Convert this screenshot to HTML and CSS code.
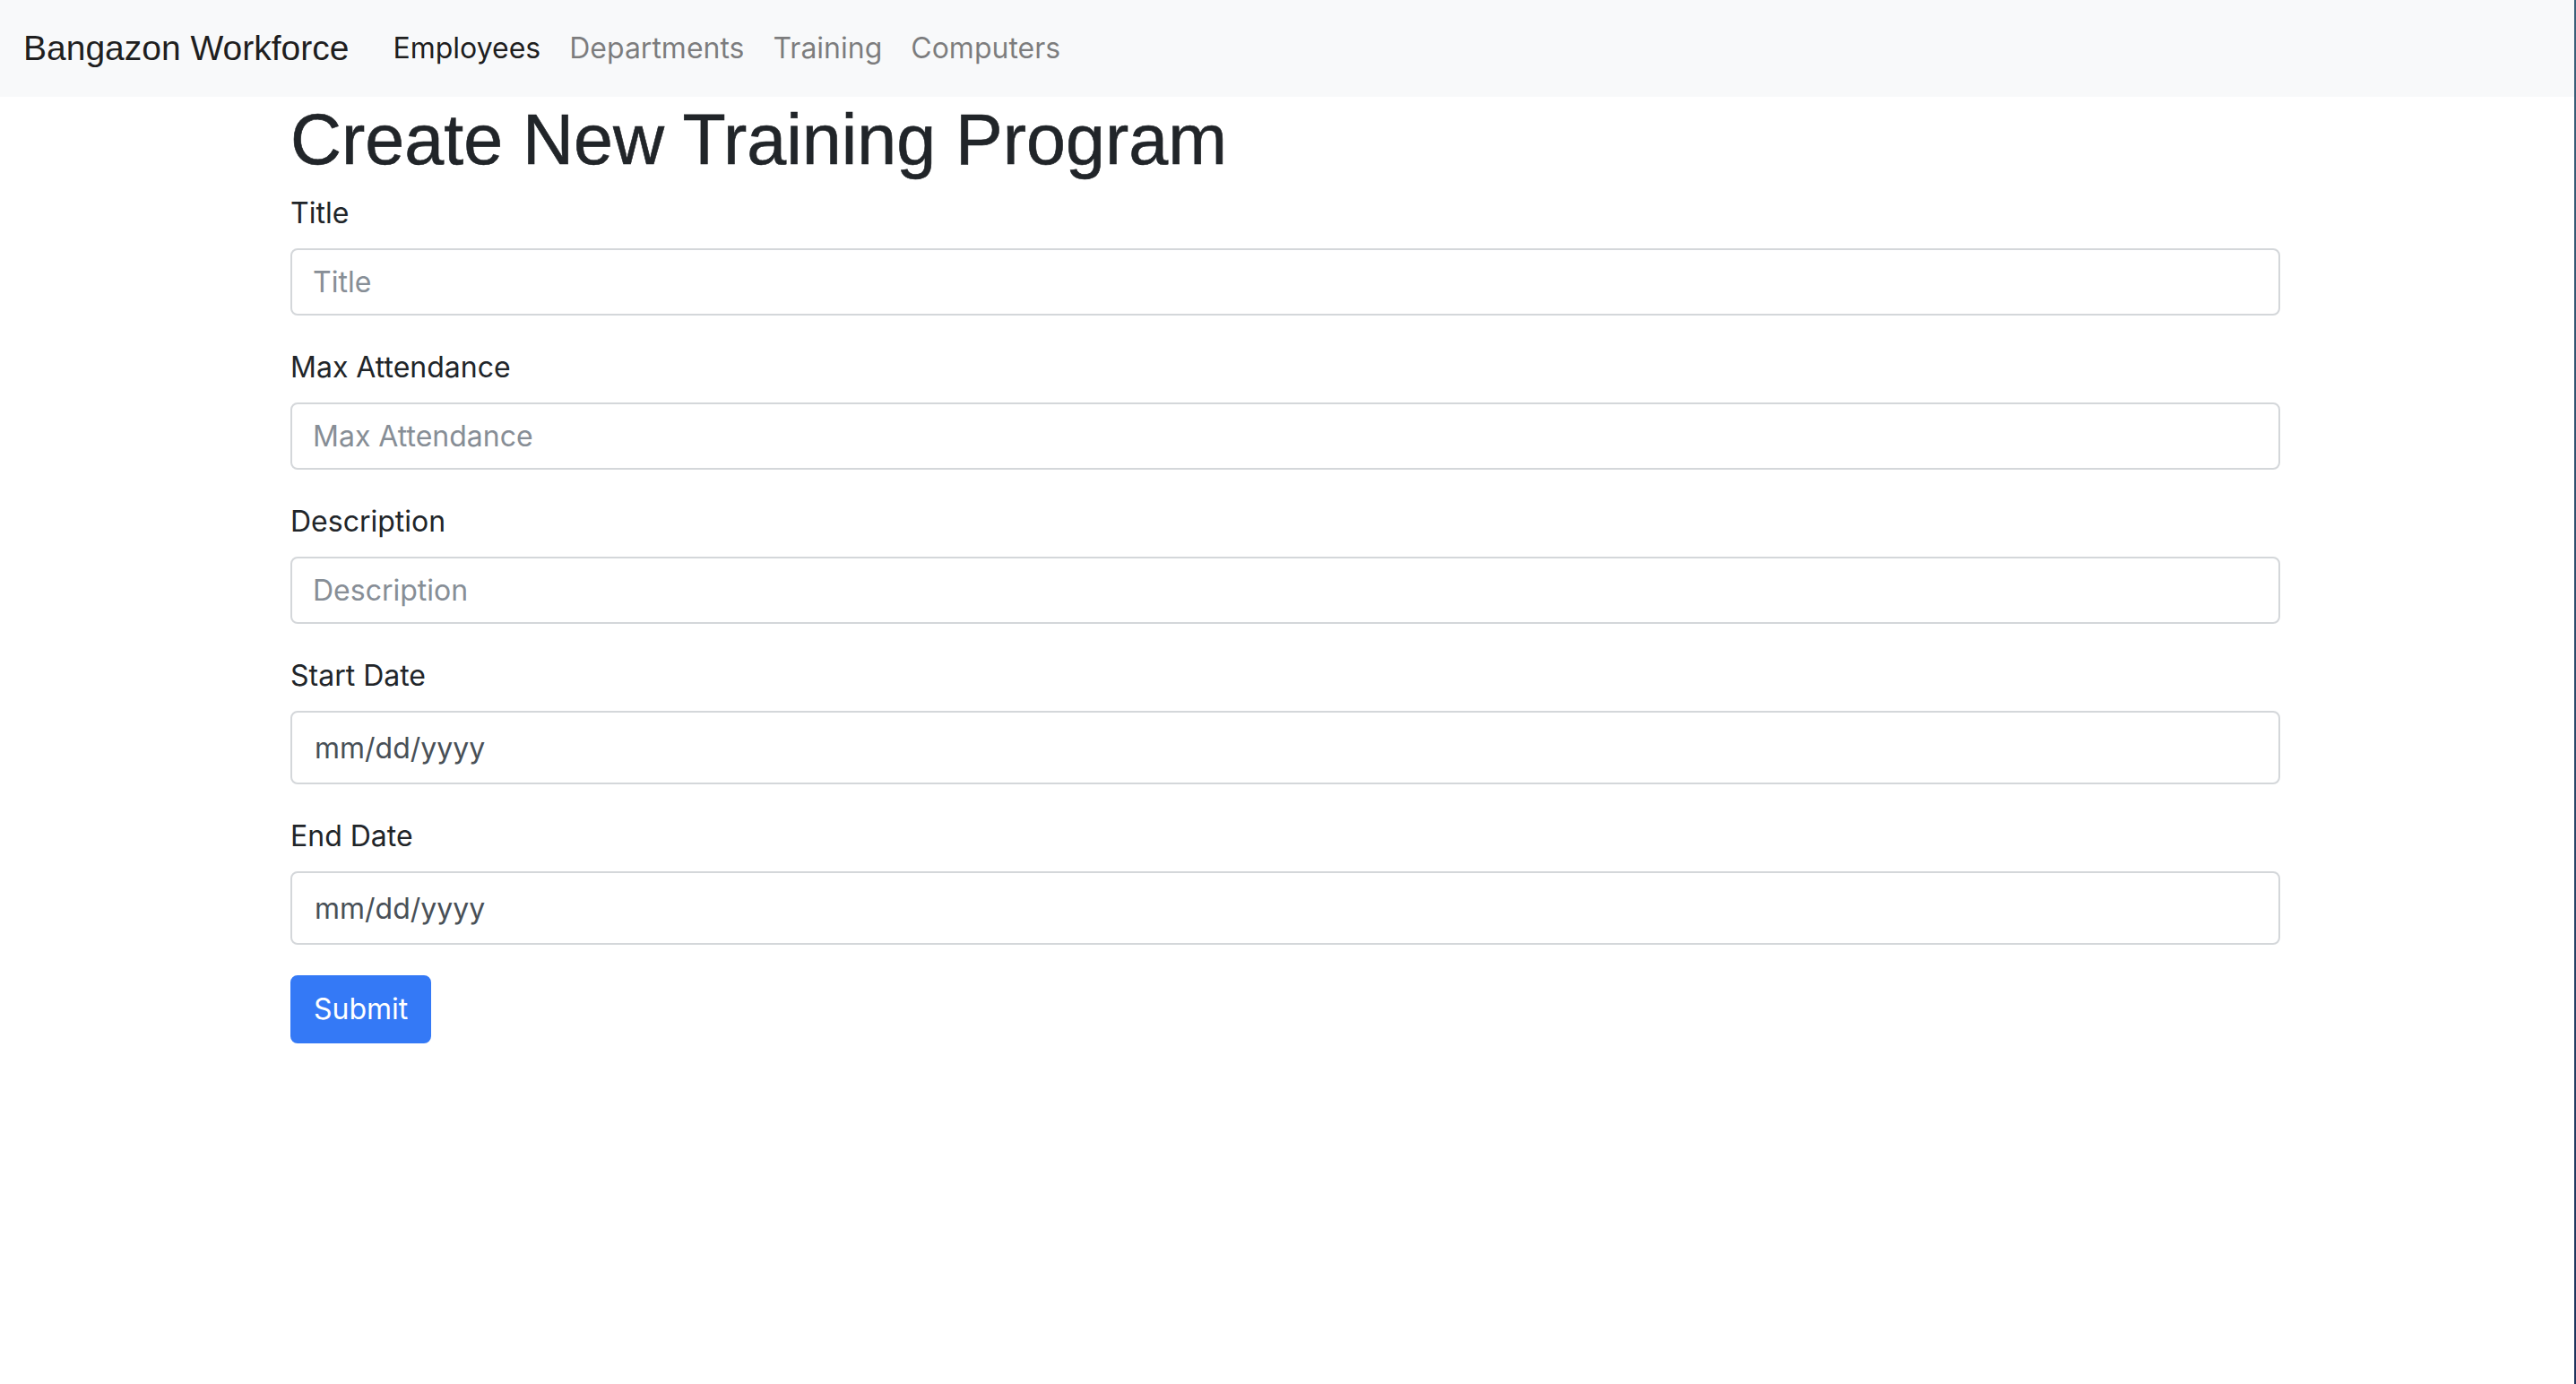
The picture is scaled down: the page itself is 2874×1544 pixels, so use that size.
FILE: index.html
```html
<!DOCTYPE html>
<html lang="en">
<head>
<meta charset="utf-8">
<title>Bangazon Workforce</title>
<link rel="stylesheet" href="styles.css">
</head>
<body>
<div class="page">
  <nav class="navbar">
    <a class="brand" href="#">Bangazon Workforce</a>
    <ul class="nav">
      <li><a class="nav-link active" href="#">Employees</a></li>
      <li><a class="nav-link" href="#">Departments</a></li>
      <li><a class="nav-link" href="#">Training</a></li>
      <li><a class="nav-link" href="#">Computers</a></li>
    </ul>
  </nav>
  <main class="container">
    <h1 class="title">Create New Training Program</h1>
    <form class="form">
      <div class="form-group">
        <label class="label" for="title">Title</label>
        <input class="input" id="title" type="text" placeholder="Title">
      </div>
      <div class="form-group">
        <label class="label" for="max">Max Attendance</label>
        <input class="input" id="max" type="text" placeholder="Max Attendance">
      </div>
      <div class="form-group">
        <label class="label" for="desc">Description</label>
        <input class="input" id="desc" type="text" placeholder="Description">
      </div>
      <div class="form-group">
        <label class="label" for="start">Start Date</label>
        <div class="input input-date" id="start">mm/dd/yyyy</div>
      </div>
      <div class="form-group">
        <label class="label" for="end">End Date</label>
        <div class="input input-date" id="end">mm/dd/yyyy</div>
      </div>
      <button class="btn" type="button">Submit</button>
    </form>
  </main>
</div>
</body>
</html>
```

FILE: styles.css
```css
html, body {
  margin: 0;
  padding: 0;
}

body {
  background: #ffffff;
  color: #212529;
  font-family: Inter, "Noto Sans", "Liberation Sans", sans-serif;
}

.page {
  height: 100vh;
  overflow: hidden;
  box-sizing: border-box;
  border-right: 2px solid #2c4d6a;
  border-image: linear-gradient(#3b6079, #1e335c) 1;
}

.navbar {
  display: flex;
  align-items: center;
  height: 108px;
  padding: 0 26px;
  background: #f8f9fa;
  box-sizing: border-box;
}

.brand {
  font-family: "Liberation Sans", Arial, sans-serif;
  font-size: 39px;
  line-height: 60px;
  color: rgba(0, 0, 0, 0.9);
  text-decoration: none;
  margin-right: 33px;
}

.nav {
  display: flex;
  list-style: none;
  margin: 0;
  padding: 0;
}

.nav-link {
  display: block;
  padding: 0 16px;
  font-size: 32px;
  line-height: 48px;
  color: rgba(0, 0, 0, 0.5);
  text-decoration: none;
}

.nav-link.active {
  color: rgba(0, 0, 0, 0.9);
}

.container {
  width: 2220px;
  margin: 0 auto;
  padding-right: 4px;
}

.title {
  margin: 0 0 10px;
  font-family: "Liberation Sans", Arial, sans-serif;
  font-size: 79px;
  line-height: 96px;
  font-weight: 400;
  color: #212529;
  -webkit-text-stroke: 0.6px #212529;
}

.form-group {
  display: flex;
  flex-direction: column;
  margin-bottom: 34px;
}

.label {
  font-size: 32px;
  line-height: 48px;
  margin-bottom: 15px;
  color: #212529;
}

.input {
  display: flex;
  align-items: center;
  box-sizing: border-box;
  width: 100%;
  height: 75px;
  margin: 0;
  padding: 0 23px;
  font-family: inherit;
  font-size: 32px;
  color: #495057;
  background: #ffffff;
  border: 2px solid #d4d7da;
  border-radius: 8px;
  outline: none;
}

.input::placeholder {
  color: #878e96;
  opacity: 1;
}

.input-date {
  height: 82px;
  padding-left: 25px;
}

.btn {
  height: 76px;
  padding: 0 24px;
  font-family: inherit;
  font-size: 32px;
  line-height: 48px;
  color: #ffffff;
  background: #3479f6;
  border: 2px solid #3479f6;
  border-radius: 8px;
  cursor: pointer;
}
```
